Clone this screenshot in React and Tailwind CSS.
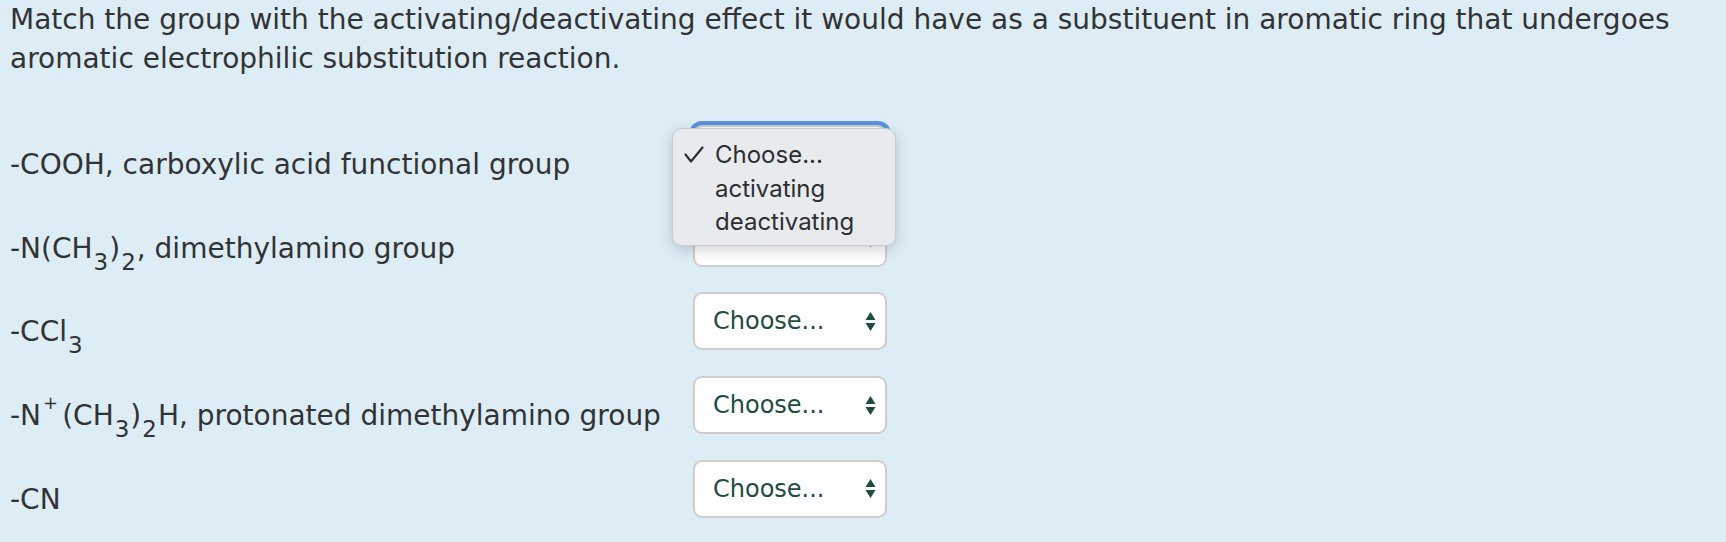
import React from 'react';

const Sub = ({ children }) => <sub className="text-[23px] bottom-[-12px] mx-[1px]">{children}</sub>;

const rows = [
    { key: 'cooh', label: <>-COOH, carboxylic acid functional group</>, open: true },
    { key: 'nme2', label: <>-N(CH<Sub>3</Sub>)<Sub>2</Sub>, dimethylamino group</> },
    { key: 'ccl3', label: <>-CCl<Sub>3</Sub></> },
    {
        key: 'nme2h',
        label: (
            <>
                -N<sup className="text-[18px] top-[-16px] ml-[2px] mr-[4px]">+</sup>(CH<Sub>3</Sub>)<Sub>2</Sub>H, protonated dimethylamino group
            </>
        ),
    },
    { key: 'cn', label: <>-CN</> },
];

const Arrows = () => (
    <svg width="11" height="21" viewBox="0 0 11 21" className="text-[#1e4d40]">
        <path d="M5.5 1 L10.5 9 L0.5 9 Z" fill="currentColor" />
        <path d="M0.5 12 L10.5 12 L5.5 20 Z" fill="currentColor" />
    </svg>
);

const Check = () => (
    <svg width="20" height="17" viewBox="0 0 20 17" fill="none" stroke="#2f3033" strokeWidth="2.2" strokeLinecap="round" strokeLinejoin="round">
        <path d="M1.5 8.5 L7 15.5 L18.5 1.5" />
    </svg>
);

const SelectBox = ({ focused }) => (
    <div
        className={`w-[194px] h-[58px] bg-white border-2 border-[#cdcdcd] rounded-[9px] flex items-center justify-between pl-[18px] pr-[9px] text-[24px] text-[#1e4d40] ${focused ? 'ring-4 ring-[#5a92e4] border-[#3f78d6]' : ''}`}
    >
        <span>Choose...</span>
        <Arrows />
    </div>
);

const Popup = () => (
    <div className="absolute left-[-21px] top-[3px] w-[224px] h-[118px] z-10 rounded-[10px] bg-[#e7ebee] border border-[#c9ccd0] shadow-[0_4px_14px_rgba(0,0,0,0.18)] pt-[9px] font-['Inter',sans-serif] text-[24px] text-[#2d2e31]">
        {['Choose...', 'activating', 'deactivating'].map((item, i) => (
            <div key={item} className="h-[33.5px] leading-[33.5px] flex items-center">
                <span className="w-[42px] flex justify-end pr-[11px]">{i === 0 && <Check />}</span>
                <span>{item}</span>
            </div>
        ))}
    </div>
);

export default function App() {
    return (
        <div className="min-h-screen bg-[#ddedf6] font-['DejaVu_Sans','Verdana',sans-serif] text-[#333] px-[10px]">
            <p className="text-[28px] leading-[39px]">
                Match the group with the activating/deactivating effect it would have as a substituent in aromatic ring that undergoes
                <br />
                aromatic electrophilic substitution reaction.
            </p>

            <div className="mt-[47px]">
                {rows.map((row) => (
                    <div key={row.key} className="h-[83.7px] flex items-start">
                        <div className="w-[683px] text-[28px] leading-[33px] pt-[23px] whitespace-nowrap">{row.label}</div>
                        <div className="relative">
                            <SelectBox focused={row.open} />
                            {row.open && <Popup />}
                        </div>
                    </div>
                ))}
            </div>
        </div>
    );
}
